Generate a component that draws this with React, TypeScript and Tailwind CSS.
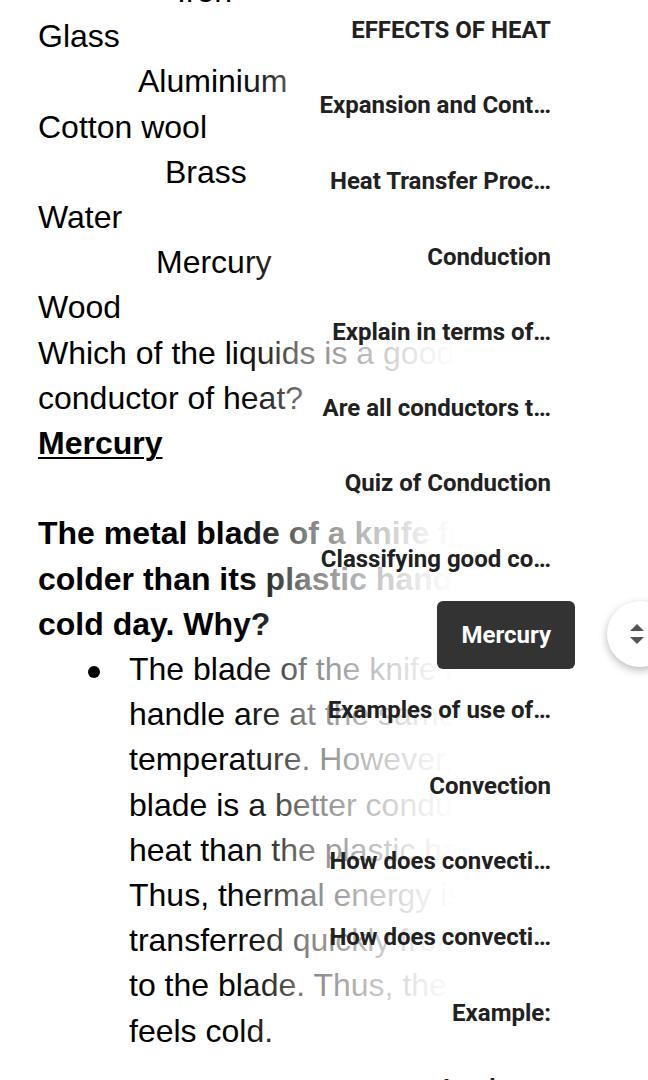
import React from 'react';

type DocLine = { text: string; indent?: string; bold?: boolean; underline?: boolean };

const docLines: DocLine[] = [
  { text: 'Iron', indent: 'pl-[177px]' },
  { text: 'Glass' },
  { text: 'Aluminium', indent: 'pl-[138px]' },
  { text: 'Cotton wool' },
  { text: 'Brass', indent: 'pl-[165px]' },
  { text: 'Water' },
  { text: 'Mercury', indent: 'pl-[156px]' },
  { text: 'Wood' },
  { text: 'Which of the liquids is a good' },
  { text: 'conductor of heat?' },
  { text: 'Mercury', bold: true, underline: true },
  { text: '\u00a0' },
  { text: 'The metal blade of a knife feels', bold: true },
  { text: 'colder than its plastic handle on a', bold: true },
  { text: 'cold day. Why?', bold: true },
];

const bulletLines = [
  'The blade of the knife and the',
  'handle are at the same',
  'temperature. However, the',
  'blade is a better conductor of',
  'heat than the plastic handle.',
  'Thus, thermal energy is',
  'transferred quickly from hand',
  'to the blade. Thus, the hand',
  'feels cold.',
];

const outline = [
  'EFFECTS OF HEAT',
  'Expansion and Cont…',
  'Heat Transfer Proc…',
  'Conduction',
  'Explain in terms of…',
  'Are all conductors t…',
  'Quiz of Conduction',
  'Classifying good co…',
  'Mercury',
  'Examples of use of…',
  'Convection',
  'How does convecti…',
  'How does convecti…',
  'Example:',
  'Insulators',
];

const ACTIVE_INDEX = 8;

export default function App() {
  return (
    <div className="relative h-[1080px] w-[648px] overflow-hidden bg-white">
      {/* Document body */}
      <div className="-mt-[31px] font-['Liberation_Sans',Arial,sans-serif] text-[32px] leading-[45.2px] text-black">
        {docLines.map((line, i) => (
          <div
            key={i}
            className={`whitespace-nowrap ${line.indent ?? 'pl-[38px]'} ${line.bold ? 'font-bold' : ''}`}
          >
            <span className={line.underline ? 'underline decoration-[2px] underline-offset-[3px]' : ''}>
              {line.text}
            </span>
          </div>
        ))}
        <div className="flex">
          <div className="w-[129px] shrink-0 pl-[88px]">
            <span className="inline-block h-[12px] w-[12px] -translate-y-[2px] rounded-full bg-black" />
          </div>
          <div>
            {bulletLines.map((t, i) => (
              <div key={i} className="whitespace-nowrap">
                {t}
              </div>
            ))}
          </div>
        </div>
      </div>

      {/* Outline overlay, fading the document out towards the right */}
      <div className="absolute inset-0 bg-[linear-gradient(to_right,rgba(255,255,255,0)_235px,rgba(255,255,255,0.18)_270px,rgba(255,255,255,0.5)_305px,rgba(255,255,255,0.75)_370px,rgba(255,255,255,0.92)_420px,#ffffff_455px)]">
        <div className="-mt-[8px] flex flex-col items-end pr-[97px] font-['Roboto',sans-serif] text-[24px] font-bold text-[#212121]">
          {outline.map((item, i) => (
            <div key={i} className="flex h-[75.6px] items-center justify-end">
              {i === ACTIVE_INDEX ? (
                <div className="-mr-[24px] flex h-[68px] items-center rounded-[6px] bg-[#333333] px-[24px] text-white">
                  {item}
                </div>
              ) : (
                <span className="whitespace-nowrap">{item}</span>
              )}
            </div>
          ))}
        </div>
      </div>

      {/* Scroll handle */}
      <div className="absolute left-[607px] top-[601px] flex h-[66px] w-[66px] items-center rounded-full bg-white shadow-[0_3px_8px_rgba(0,0,0,0.28)]">
        <svg width="20" height="28" viewBox="0 0 20 28" className="ml-[20px]">
          <path d="M3 11 L10 4 L17 11 Z" fill="#555" />
          <path d="M3 17 L10 24 L17 17 Z" fill="#555" />
        </svg>
      </div>
    </div>
  );
}
